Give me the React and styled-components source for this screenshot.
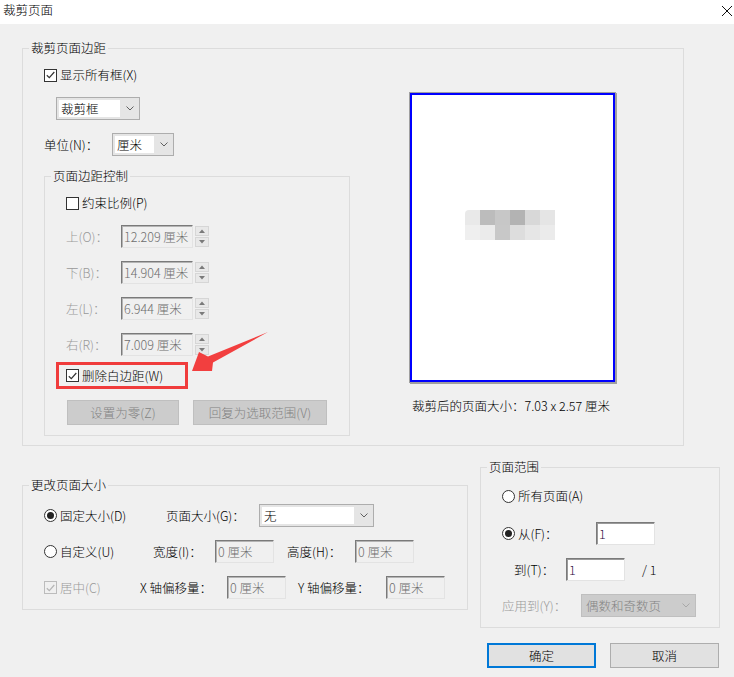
import React from 'react';
import styled, { createGlobalStyle } from 'styled-components';

const GlobalStyle = createGlobalStyle`
  html, body {
    margin: 0;
    padding: 0;
  }

  body {
    background: #f0f0f0;
    font-family: "Noto Sans CJK SC", "Noto Sans", "Liberation Sans", sans-serif;
    font-size: 12.5px;
    font-weight: 300;
    color: #000;
  }
`;

const Dialog = styled.div`
  width: 734px;
  height: 677px;
  background: #f0f0f0;
  overflow: hidden;
`;

const TitleBar = styled.div`
  height: 24px;
  box-sizing: border-box;
  background: #fff;
  display: flex;
  align-items: flex-start;
  justify-content: space-between;
  padding: 2px 2px 0 3px;
  line-height: 16px;
`;

const CloseIcon = styled.svg`
  margin-top: 4px;
`;

const Body = styled.div`
  padding: 16px 0 0 22px;
`;

const Group = styled.fieldset`
  margin: 0;
  padding: 0;
  min-width: 0;
  width: ${p => p.$w}px;
  box-sizing: border-box;
  border: 1px solid #dcdcdc;
`;

const Legend = styled.legend`
  margin-left: 6px;
  padding: 0 2px;
  height: 16px;
  line-height: 16px;
`;

const TopContent = styled.div`
  display: flex;
`;

const LeftCol = styled.div`
  width: 337px;
  box-sizing: border-box;
  padding: 9px 0 9px 21px;
  display: flex;
  flex-direction: column;
  align-items: flex-start;
`;

const PreviewCol = styled.div`
  padding: 36px 0 0 49px;
`;

const Page = styled.div`
  width: 207px;
  height: 291px;
  box-sizing: border-box;
  border: 1px solid #a0a0a0;
  box-shadow: 1px 1px 0 #a0a0a0;
  background: #fff;
  display: flex;
`;

const CropFrame = styled.div`
  flex: 1;
  border: 2px solid #0000ff;
  padding: 115px 0 0 53px;
`;

const Mosaic = styled.div`
  display: grid;
  grid-template-columns: repeat(6, 15px);
  grid-auto-rows: 15px;
  width: 90px;
  border-top-left-radius: 4px;
  overflow: hidden;
`;

const Tile = styled.div`
  background: ${p => p.$c};
`;

const Caption = styled.div`
  margin: 15px 0 0 3px;
  line-height: 16px;
`;

const CheckRow = styled.div`
  display: flex;
  align-items: center;
  gap: 3px;
  height: 20px;
  line-height: 16px;
  color: ${p => (p.$disabled ? '#8c8c8c' : '#000')};
`;

const Box = styled.span`
  width: 13px;
  height: 13px;
  box-sizing: border-box;
  border: 1px solid ${p => (p.$disabled ? '#bcbcbc' : '#333')};
  background: ${p => (p.$disabled ? '#f0f0f0' : '#fff')};
  display: flex;
  align-items: center;
  justify-content: center;
`;

const Round = styled.span`
  width: 13px;
  height: 13px;
  box-sizing: border-box;
  border: 1px solid #333;
  border-radius: 50%;
  background: #fff;
  display: flex;
  align-items: center;
  justify-content: center;

  &::after {
    content: '';
    display: ${p => (p.$checked ? 'block' : 'none')};
    width: 7px;
    height: 7px;
    border-radius: 50%;
    background: #222;
  }
`;

const Row = styled.div`
  display: flex;
  align-items: center;
  height: 23px;
  margin-top: ${p => p.$mt || 0}px;
  margin-left: ${p => p.$ml || 0}px;
  line-height: 16px;
`;

const Cell = styled.div`
  width: ${p => p.$w}px;
  flex: none;
  display: flex;
  align-items: center;
  gap: 3px;
  color: ${p => (p.$disabled ? '#999' : '#000')};
  white-space: nowrap;
`;

const Combo = styled.div`
  display: flex;
  width: ${p => p.$w}px;
  height: 23px;
  box-sizing: border-box;
  margin-top: ${p => p.$mt || 0}px;
  margin-left: ${p => p.$ml || 0}px;
  padding: 2px 0 2px 2px;
  border: 1px solid ${p => (p.$disabled ? '#bfbfbf' : '#adadad')};
  background: ${p => (p.$disabled ? '#cccccc' : '#e5e5e5')};
`;

const ComboField = styled.div`
  flex: 1;
  display: flex;
  align-items: center;
  padding-left: 2px;
  line-height: 16px;
  background: ${p => (p.$disabled ? 'transparent' : '#fff')};
  color: ${p => (p.$disabled ? '#838383' : '#000')};
`;

const ComboArrow = styled.div`
  width: 19px;
  display: flex;
  align-items: center;
  justify-content: center;
`;

const Field = styled.input`
  width: ${p => p.$w}px;
  height: 23px;
  box-sizing: border-box;
  margin: 0;
  padding: 0 2px;
  font: inherit;
  line-height: 16px;
  outline: none;
  border-style: solid;
  border-width: 1px;
  border-color: #7a7a7a #e3e3e3 #e3e3e3 #7a7a7a;
  box-shadow: inset 1px 1px 0 ${p => (p.$disabled ? '#b4b4b4' : '#9a9a9a')};
  background: ${p => (p.$disabled ? '#f0f0f0' : '#fff')};
  color: ${p => (p.$disabled ? '#6d6d6d' : '#2a0a3a')};
`;

const Spinner = styled.div`
  display: flex;
  flex-direction: column;
  gap: 1px;
  margin-left: 2px;
  height: 21px;
`;

const SpinButton = styled.div`
  width: 14px;
  height: 10px;
  box-sizing: border-box;
  border: 1px solid #d6d6d6;
  background: #e8e8e8;
  display: flex;
  align-items: center;
  justify-content: center;
`;

const InnerContent = styled.div`
  padding: 9px 0 10px 21px;
  display: flex;
  flex-direction: column;
  align-items: flex-start;
`;

const Highlight = styled.div`
  position: relative;
  margin: 6px 0 0 -10px;
  width: 132px;
  height: 27px;
  box-sizing: border-box;
  border: 3px solid #f03c3c;
  padding-left: 7px;
  display: flex;
  align-items: center;
`;

const Arrow = styled.svg`
  position: absolute;
  left: 126px;
  top: -37px;
`;

const ButtonRow = styled.div`
  display: flex;
  gap: ${p => p.$gap}px;
  margin-top: ${p => p.$mt}px;
  margin-left: ${p => p.$ml}px;
`;

const Button = styled.button`
  width: ${p => p.$w}px;
  height: 25px;
  box-sizing: border-box;
  margin: 0;
  padding: 0;
  font: inherit;
  line-height: 16px;
  color: ${p => (p.disabled ? '#838383' : '#000')};
  background: ${p => (p.disabled ? '#cccccc' : '#e1e1e1')};
  border: ${p => (p.$primary ? '2px solid #0078d7' : `1px solid ${p.disabled ? '#bfbfbf' : '#adadad'}`)};
`;

const BottomRow = styled.div`
  display: flex;
  align-items: flex-start;
`;

const LeftBottom = styled.div`
  margin-top: 31px;
`;

const RightBottom = styled.div`
  margin: 13px 0 0 12px;
`;

const GroupContent = styled.div`
  padding: 11px 0 10px 21px;
`;

const Slash = styled.span`
  margin-left: 17px;
`;

const Check = ({ checked, disabled }) => (
  <Box $disabled={disabled}>
    {checked && (
      <svg width="9" height="8" viewBox="0 0 9 8">
        <path d="M0.8 4.2 L3.3 6.6 L8.3 1" fill="none" stroke={disabled ? '#b5b5b5' : '#333'} strokeWidth="1.2" />
      </svg>
    )}
  </Box>
);

const Chevron = ({ color = '#606060' }) => (
  <svg width="8" height="5" viewBox="0 0 8 5">
    <path d="M0.5 0.5 L4 4 L7.5 0.5" fill="none" stroke={color} strokeWidth="1" />
  </svg>
);

const Select = ({ w, value, disabled, mt, ml }) => (
  <Combo $w={w} $disabled={disabled} $mt={mt} $ml={ml}>
    <ComboField $disabled={disabled}>{value}</ComboField>
    <ComboArrow>
      <Chevron color={disabled ? '#a8a8a8' : '#606060'} />
    </ComboArrow>
  </Combo>
);

const Triangle = ({ up }) => (
  <svg width="6" height="4" viewBox="0 0 6 4">
    <path d={up ? 'M0 4 L3 0.5 L6 4 Z' : 'M0 0 L3 3.5 L6 0 Z'} fill="#7a7a7a" />
  </svg>
);

const margins = [
  { label: '上(O)：', value: '12.209 厘米' },
  { label: '下(B)：', value: '14.904 厘米' },
  { label: '左(L)：', value: '6.944 厘米' },
  { label: '右(R)：', value: '7.009 厘米' },
];

const mosaic = [
  '#e9e9e9', '#bcbcbc', '#c7c7c7', '#b3b3b3', '#d8d8d8', '#e5e5e5',
  '#efefef', '#ebebeb', '#c8c8c8', '#dddddd', '#e6e6e6', '#ebebeb',
];

const App = () => (
  <Dialog>
    <GlobalStyle />
    <TitleBar>
      <span>裁剪页面</span>
      <CloseIcon width="10" height="10" viewBox="0 0 10 10">
        <path d="M0 0 L10 10 M10 0 L0 10" stroke="#111" strokeWidth="1" />
      </CloseIcon>
    </TitleBar>

    <Body>
      <Group $w={662}>
        <Legend>裁剪页面边距</Legend>
        <TopContent>
          <LeftCol>
            <CheckRow>
              <Check checked />
              显示所有框(X)
            </CheckRow>
            <Select w={84} value="裁剪框" mt={12} ml={12} />
            <Row $mt={13}>
              <Cell $w={68}>单位(N)：</Cell>
              <Select w={62} value="厘米" />
            </Row>

            <Group $w={306} style={{ marginTop: 12 }}>
              <Legend>页面边距控制</Legend>
              <InnerContent>
                <CheckRow>
                  <Check />
                  约束比例(P)
                </CheckRow>
                {margins.map((m, i) => (
                  <Row key={m.label} $mt={i === 0 ? 12 : 13}>
                    <Cell $w={55} $disabled>{m.label}</Cell>
                    <Field $w={72} $disabled readOnly value={m.value} />
                    <Spinner>
                      <SpinButton><Triangle up /></SpinButton>
                      <SpinButton><Triangle /></SpinButton>
                    </Spinner>
                  </Row>
                ))}
                <Highlight>
                  <CheckRow>
                    <Check checked />
                    删除白边距(W)
                  </CheckRow>
                  <Arrow width="87" height="50" viewBox="0 0 87 50">
                    <polygon points="7,43 14,24 23,28.5 83,4 28,34.5 27,43" fill="#f23f3f" />
                  </Arrow>
                </Highlight>
                <ButtonRow $gap={14} $mt={11} $ml={1}>
                  <Button $w={112} disabled>设置为零(Z)</Button>
                  <Button $w={134} disabled>回复为选取范围(V)</Button>
                </ButtonRow>
              </InnerContent>
            </Group>
          </LeftCol>

          <PreviewCol>
            <Page>
              <CropFrame>
                <Mosaic>
                  {mosaic.map((c, i) => <Tile key={i} $c={c} />)}
                </Mosaic>
              </CropFrame>
            </Page>
            <Caption>裁剪后的页面大小：7.03 x 2.57 厘米</Caption>
          </PreviewCol>
        </TopContent>
      </Group>

      <BottomRow>
        <LeftBottom>
          <Group $w={446}>
            <Legend>更改页面大小</Legend>
            <GroupContent>
              <Row>
                <Cell $w={122}><Round $checked />固定大小(D)</Cell>
                <Cell $w={93}>页面大小(G)：</Cell>
                <Select w={115} value="无" />
              </Row>
              <Row $mt={13}>
                <Cell $w={109}><Round />自定义(U)</Cell>
                <Cell $w={62}>宽度(I)：</Cell>
                <Field $w={59} $disabled readOnly value="0 厘米" />
                <Cell $w={13} />
                <Cell $w={68}>高度(H)：</Cell>
                <Field $w={59} $disabled readOnly value="0 厘米" />
              </Row>
              <Row $mt={13}>
                <Cell $w={96} $disabled><Check checked disabled />居中(C)</Cell>
                <Cell $w={87}>X 轴偏移量：</Cell>
                <Field $w={59} $disabled readOnly value="0 厘米" />
                <Cell $w={12} />
                <Cell $w={88}>Y 轴偏移量：</Cell>
                <Field $w={59} $disabled readOnly value="0 厘米" />
              </Row>
            </GroupContent>
          </Group>
        </LeftBottom>

        <RightBottom>
          <Group $w={240}>
            <Legend>页面范围</Legend>
            <GroupContent>
              <CheckRow>
                <Round />
                所有页面(A)
              </CheckRow>
              <Row $mt={16}>
                <Cell $w={94}><Round $checked />从(F)：</Cell>
                <Field $w={59} readOnly value="1" />
              </Row>
              <Row $mt={13} $ml={12}>
                <Cell $w={52}>到(T)：</Cell>
                <Field $w={59} readOnly value="1" />
                <Slash>/ 1</Slash>
              </Row>
              <Row $mt={13}>
                <Cell $w={79} $disabled>应用到(Y)：</Cell>
                <Select w={115} value="偶数和奇数页" disabled />
              </Row>
            </GroupContent>
          </Group>
          <ButtonRow $gap={14} $mt={15} $ml={7}>
            <Button $w={109} $primary>确定</Button>
            <Button $w={109}>取消</Button>
          </ButtonRow>
        </RightBottom>
      </BottomRow>
    </Body>
  </Dialog>
);

export default App;
